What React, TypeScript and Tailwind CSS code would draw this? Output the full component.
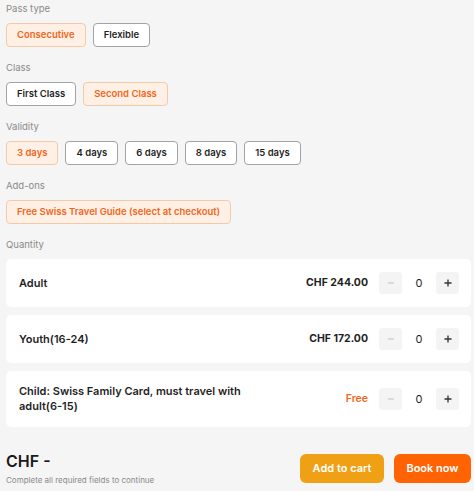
import React, { useState } from "react";

type OptionProps = {
  label: string;
  active?: boolean;
  onClick?: () => void;
};

const Option: React.FC<OptionProps> = ({ label, active, onClick }) => (
  <button
    onClick={onClick}
    className={
      active
        ? "h-[24px] px-[10px] rounded-[4px] border border-[#f7c8a6] bg-[#fff0e5] text-[#f2661b] text-[9.5px] font-semibold whitespace-nowrap"
        : "h-[24px] px-[10px] rounded-[4px] border border-[#a3a3a3] bg-white text-[#1f1f1f] text-[9.5px] font-semibold whitespace-nowrap"
    }
  >
    {label}
  </button>
);

const Label: React.FC<{ children: React.ReactNode }> = ({ children }) => (
  <div className="text-[9.5px] text-[#8a8a8a] leading-[14px]">{children}</div>
);

const Section: React.FC<{ title: string; children: React.ReactNode }> = ({
  title,
  children,
}) => (
  <div className="flex flex-col">
    <Label>{title}</Label>
    <div className="flex gap-[7px] mt-[7px]">{children}</div>
  </div>
);

type Ticket = { name: string; price: string; free?: boolean };

const tickets: Ticket[] = [
  { name: "Adult", price: "CHF 244.00" },
  { name: "Youth(16-24)", price: "CHF 172.00" },
  { name: "Child: Swiss Family Card, must travel with adult(6-15)", price: "Free", free: true },
];

const QtyRow: React.FC<{ ticket: Ticket }> = ({ ticket }) => {
  const [count, setCount] = useState(0);
  return (
    <div className="flex items-center bg-white rounded-[5px] pl-[13px] pr-[12px] py-[13px] min-h-[48px]">
      <div className="w-[232px] text-[11px] font-semibold text-[#1f1f1f] leading-[15px]">
        {ticket.name}
      </div>
      <div className="ml-auto flex items-center">
        <span
          className={
            ticket.free
              ? "text-[10.5px] font-semibold text-[#f2661b] mr-[11px]"
              : "text-[10.5px] font-bold text-[#1f1f1f] mr-[11px]"
          }
        >
          {ticket.price}
        </span>
        <button
          onClick={() => setCount(Math.max(0, count - 1))}
          className="w-[23px] h-[22px] rounded-[3px] bg-[#f4f4f4] flex items-center justify-center text-[#c8c8c8]"
        >
          <svg width="10" height="10" viewBox="0 0 10 10">
            <path d="M2 5h6" stroke="currentColor" strokeWidth="1.2" />
          </svg>
        </button>
        <span className="w-[34px] text-center text-[11px] text-[#1f1f1f]">{count}</span>
        <button
          onClick={() => setCount(count + 1)}
          className="w-[23px] h-[22px] rounded-[3px] bg-[#f4f4f4] flex items-center justify-center text-[#333]"
        >
          <svg width="10" height="10" viewBox="0 0 10 10">
            <path d="M1.5 5h7M5 1.5v7" stroke="currentColor" strokeWidth="1.3" />
          </svg>
        </button>
      </div>
    </div>
  );
};

export default function App() {
  const [pass, setPass] = useState("Consecutive");
  const [cls, setCls] = useState("Second Class");
  const [days, setDays] = useState("3 days");

  return (
    <div
      className="w-[474px] h-[491px] bg-[#f5f5f5] pl-[6px] pr-[3px] pt-[2px] flex flex-col overflow-hidden"
      style={{ fontFamily: "Inter, 'Open Sans', sans-serif" }}
    >
      <div className="flex flex-col gap-[14px]">
        <Section title="Pass type">
          {["Consecutive", "Flexible"].map((p) => (
            <Option key={p} label={p} active={pass === p} onClick={() => setPass(p)} />
          ))}
        </Section>
        <Section title="Class">
          {["First Class", "Second Class"].map((c) => (
            <Option key={c} label={c} active={cls === c} onClick={() => setCls(c)} />
          ))}
        </Section>
        <Section title="Validity">
          {["3 days", "4 days", "6 days", "8 days", "15 days"].map((d) => (
            <Option key={d} label={d} active={days === d} onClick={() => setDays(d)} />
          ))}
        </Section>
        <Section title="Add-ons">
          <Option label="Free Swiss Travel Guide (select at checkout)" active />
        </Section>
        <div className="flex flex-col">
          <Label>Quantity</Label>
          <div className="flex flex-col gap-[8px] mt-[7px]">
            {tickets.map((t) => (
              <QtyRow key={t.name} ticket={t} />
            ))}
          </div>
        </div>
      </div>

      <div className="flex items-center mt-[24px]">
        <div className="flex flex-col">
          <div className="text-[16px] font-semibold text-[#1a1a1a] leading-[20px]">CHF -</div>
          <div className="text-[8px] text-[#8a8a8a] mt-[3px]">
            Complete all required fields to continue
          </div>
        </div>
        <div className="ml-auto flex gap-[10px]">
          <button className="w-[84px] h-[29px] rounded-[6px] bg-[#f0a014] text-white text-[11px] font-semibold">
            Add to cart
          </button>
          <button className="w-[77px] h-[29px] rounded-[6px] bg-[#ff6303] text-white text-[11px] font-semibold">
            Book now
          </button>
        </div>
      </div>
    </div>
  );
}
